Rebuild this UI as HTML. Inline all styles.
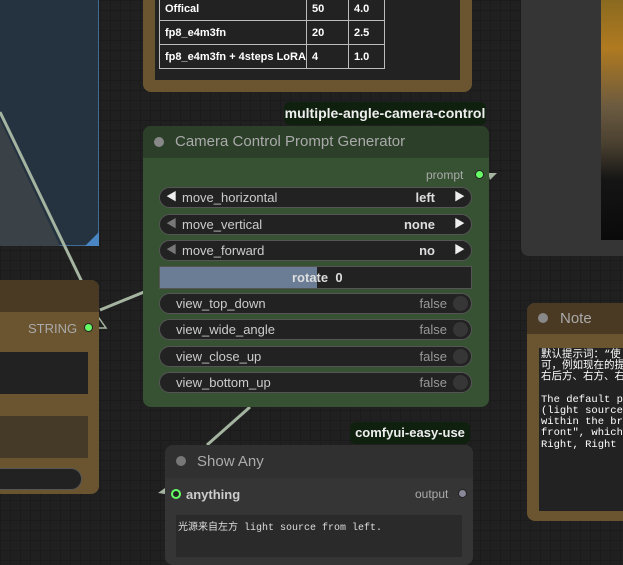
<!DOCTYPE html>
<html><head><meta charset="utf-8"><style>
*{margin:0;padding:0;box-sizing:border-box}
body{width:623px;height:557px;overflow:hidden;position:relative;font-family:"Liberation Sans","Noto Sans CJK SC",sans-serif;
background-color:#202020;background-image:linear-gradient(#1b1b1b 1px,transparent 1px),linear-gradient(90deg,#1b1b1b 1px,transparent 1px);background-size:10px 10px}
.a{position:absolute}
.w{position:absolute;left:159px;width:313px;height:21px;background:#222;border:1px solid #555;border-radius:11px;color:#ccc;font-size:13px;line-height:19px}
.w .l{position:absolute;left:16px}
.w .r{position:absolute;right:16px;color:#999}
.wa .l{left:22px}
.wa .r{right:36px;color:#ddd;font-weight:bold}
.ar{position:absolute;top:0;font-size:11px;color:#eee}
.tg{position:absolute;right:3px;top:2px;width:15px;height:15px;border-radius:50%;background:#363636}
table{table-layout:fixed;border-collapse:collapse}
td{border:1px solid #bbb;color:#fff;font-weight:bold;font-size:11px;padding:0 5px;height:24px;white-space:nowrap;overflow:hidden}
.mono{font-family:"Liberation Mono","Noto Sans CJK SC",monospace}
</style></head><body>
<div class="a" style="left:0;top:0;width:99px;height:246px;background:#24333f;border-right:1px solid #3e6c96;border-bottom:1px solid #3e6c96"></div>
<svg class="a" style="left:0;top:0" width="623" height="557">
<polygon points="0,120 60,246 0,246" fill="#3a4147"/>
<polygon points="85,246 99,232 99,246" fill="#4a86c4"/>
<line x1="0" y1="112" x2="82" y2="282" stroke="#a4b4a0" stroke-width="3"/>
<line x1="144" y1="292" x2="100" y2="310" stroke="#a4b4a0" stroke-width="3"/>
<line x1="250" y1="407" x2="207" y2="445" stroke="#a4b4a0" stroke-width="3"/>
<polygon points="99,318 106,328 96,328" fill="none" stroke="#a4b4a0" stroke-width="1.5"/>
<polygon points="158,493 165,488 165,494" fill="#a4b4a0"/>
<polygon points="488,173 497,173 490,180" fill="#a4b4a0"/>
</svg>
<div class="a" style="left:143px;top:-10px;width:329px;height:102px;background:#6b5530;border-radius:8px"></div>
<div class="a" style="left:155px;top:-10px;width:305px;height:90px;background:#222"></div>
<table class="a" style="left:159px;top:-4px;width:225px">
<col style="width:147px"><col style="width:42px"><col style="width:36px">
<tr><td>Offical</td><td>50</td><td>4.0</td></tr>
<tr><td>fp8_e4m3fn</td><td>20</td><td>2.5</td></tr>
<tr><td>fp8_e4m3fn + 4steps LoRA</td><td>4</td><td>1.0</td></tr>
</table>
<div class="a" style="left:521px;top:-10px;width:110px;height:266px;background:#353535;border-radius:8px"></div>
<div class="a" style="left:601px;top:0;width:22px;height:240px;background:linear-gradient(#8a6a20,#b07a20 20%,#6a5a40 45%,#4a4030 60%,#151515 75%,#0a0a0a)"></div>
<div class="a" style="left:284px;top:102px;width:202px;height:23px;background:#10200f;border-radius:6px;color:#eee;font-weight:bold;font-size:14px;line-height:23px;text-align:center">multiple-angle-camera-control</div>
<div class="a" style="left:143px;top:126px;width:346px;height:281px;background:#365233;border-radius:8px;overflow:hidden">
<div style="height:32px;background:#2b3f29;color:#aaa;font-size:15px;line-height:32px;padding-left:32px;position:relative">Camera Control Prompt Generator<span style="position:absolute;left:11px;top:11px;width:10px;height:10px;border-radius:50%;background:#888"></span></div>
</div>
<div class="a" style="left:426px;top:168px;color:#aaa;font-size:12px">prompt</div>
<div class="a" style="left:475px;top:170px;width:9px;height:9px;border-radius:50%;background:#6f6;border:1px solid #222"></div>
<div class="w wa" style="top:187px"><span class="ar" style="left:6px">◀</span><span class="l">move_horizontal</span><span class="r">left</span><span class="ar" style="right:6px">▶</span></div>
<div class="w wa" style="top:214px"><span class="ar" style="left:6px;color:#777">◀</span><span class="l">move_vertical</span><span class="r">none</span><span class="ar" style="right:6px">▶</span></div>
<div class="w wa" style="top:240px"><span class="ar" style="left:6px;color:#777">◀</span><span class="l">move_forward</span><span class="r">no</span><span class="ar" style="right:6px">▶</span></div>
<div class="a" style="left:159px;top:266px;width:313px;height:23px;background:#222;border:1px solid #555;color:#ddd;font-size:13px;line-height:21px;font-weight:bold"><div style="position:absolute;left:0;top:0;width:157px;height:21px;background:#6a7d95"></div><span style="position:absolute;left:132px">rotate&nbsp;&nbsp;0</span></div>
<div class="w" style="top:293px"><span class="l">view_top_down</span><span class="r" style="right:24px">false</span><span class="tg"></span></div>
<div class="w" style="top:319px"><span class="l">view_wide_angle</span><span class="r" style="right:24px">false</span><span class="tg"></span></div>
<div class="w" style="top:346px"><span class="l">view_close_up</span><span class="r" style="right:24px">false</span><span class="tg"></span></div>
<div class="w" style="top:372px"><span class="l">view_bottom_up</span><span class="r" style="right:24px">false</span><span class="tg"></span></div>
<div class="a" style="left:-10px;top:280px;width:109px;height:214px;background:#6b5530;border-radius:8px;overflow:hidden"><div style="height:32px;background:#4a3a23"></div></div>
<div class="a" style="left:28px;top:321px;color:#aaa;font-size:13px">STRING</div>
<div class="a" style="left:84px;top:323px;width:9px;height:9px;border-radius:50%;background:#6f6;border:1px solid #222"></div>
<div class="a" style="left:0;top:352px;width:88px;height:42px;background:#222"></div>
<div class="a" style="left:0;top:416px;width:88px;height:42px;background:#453a28"></div>
<div class="a" style="left:-10px;top:468px;width:92px;height:22px;background:#222;border:1px solid #555;border-radius:11px"></div>
<div class="a" style="left:350px;top:422px;width:120px;height:22px;background:#10200f;border-radius:6px;color:#eee;font-weight:bold;font-size:13px;line-height:22px;text-align:center">comfyui-easy-use</div>
<div class="a" style="left:165px;top:445px;width:308px;height:120px;background:#353535;border-radius:8px;overflow:hidden"><div style="height:33px;background:#303030;color:#aaa;font-size:15px;line-height:33px;padding-left:32px;position:relative">Show Any<span style="position:absolute;left:11px;top:11px;width:10px;height:10px;border-radius:50%;background:#777"></span></div></div>
<div class="a" style="left:171px;top:489px;width:10px;height:10px;border-radius:50%;border:2.5px solid #6f6;background:#222"></div>
<div class="a" style="left:186px;top:487px;color:#ccc;font-size:13px;font-weight:bold">anything</div>
<div class="a" style="left:415px;top:487px;color:#aaa;font-size:12px">output</div>
<div class="a" style="left:458px;top:489px;width:9px;height:9px;border-radius:50%;background:#889;border:1px solid #222"></div>
<div class="a mono" style="left:176px;top:515px;width:286px;height:42px;background:#2a2a2a;color:#ddd;font-size:10px;padding:3px 2px">光源来自左方 light source from left.</div>
<div class="a" style="left:527px;top:303px;width:110px;height:218px;background:#6b5530;border-radius:8px;overflow:hidden"><div style="height:31px;background:#4a3a23;color:#aaa;font-size:15px;line-height:31px;padding-left:33px;position:relative">Note<span style="position:absolute;left:11px;top:10px;width:10px;height:10px;border-radius:50%;background:#888"></span></div></div>
<div class="a mono" style="left:539px;top:348px;width:84px;height:163px;background:#222;color:#fff;font-size:10.5px;line-height:11.2px;padding:2px 2px;white-space:pre;overflow:hidden">默认提示词：“使
可，例如现在的提
右后方、右方、右

The default pro
(light source f
within the brac
front", which c
Right, Right Fr</div>
</body></html>
